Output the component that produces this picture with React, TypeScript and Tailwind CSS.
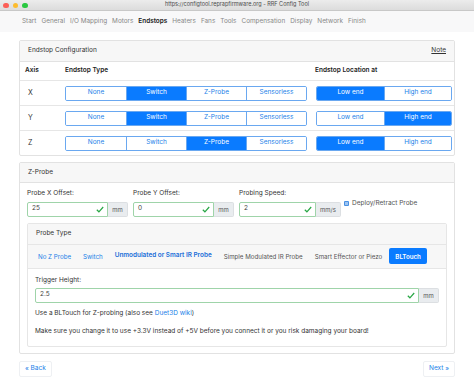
import React from "react";

const font = { fontFamily: "Inter, 'Liberation Sans', Arial, sans-serif" };

function Check() {
  return (
    <svg width="8" height="7" viewBox="0 0 8 7" className="shrink-0">
      <path d="M0.8 3.8 L2.9 5.8 L7.2 1" fill="none" stroke="#28a745" strokeWidth="1.2" />
    </svg>
  );
}

function BtnGroup({ items, active, widths }: { items: string[]; active: number; widths: string[] }) {
  return (
    <div className="flex h-[15px] rounded-[2px] border border-[#6aa8f0] overflow-hidden">
      {items.map((it, i) => (
        <div
          key={it}
          className={`${widths[i]} flex items-center justify-center text-[6.5px] ${
            i > 0 ? "border-l border-[#6aa8f0]" : ""
          } ${i === active ? "bg-[#0a7bff] text-white" : "bg-white text-[#1a7fe8]"}`}
        >
          {it}
        </div>
      ))}
    </div>
  );
}

function Row({ axis, type, loc }: { axis: string; type: number; loc: number }) {
  return (
    <div className="flex h-[25px] items-center border-t border-[#e6e6e6]">
      <div className="w-[45px] pl-[8px] text-[7px] text-[#333]">{axis}</div>
      <BtnGroup
        items={["None", "Switch", "Z-Probe", "Sensorless"]}
        active={type}
        widths={["w-[60px]", "w-[60px]", "w-[60px]", "w-[60px]"]}
      />
      <div className="w-[9px]" />
      <BtnGroup items={["Low end", "High end"]} active={loc} widths={["w-[67px]", "w-[67px]"]} />
    </div>
  );
}

function Input({ value, w, unit, uw }: { value: string; w: string; unit: string; uw: string }) {
  return (
    <div className="flex h-[15px]">
      <div className={`${w} flex items-center justify-between rounded-l-[2px] border border-[#9fd4a9] bg-white pl-[4px] pr-[3px] text-[6.5px] text-[#444]`}>
        <span>{value}</span>
        <Check />
      </div>
      <div className={`${uw} flex items-center justify-center rounded-r-[2px] border border-l-0 border-[#dcdfe2] bg-[#e9ecef] text-[6px] text-[#555]`}>
        {unit}
      </div>
    </div>
  );
}

export default function App() {
  return (
    <div className="w-[474px] h-[382px] overflow-hidden bg-white relative" style={font}>
      {/* title bar */}
      <div className="relative h-[11px] bg-gradient-to-b from-[#ececec] to-[#dcdcdc] border-b border-[#c8c8c8] flex items-center justify-center">
        <div className="absolute left-[3px] top-[2.5px] flex gap-[4px]">
          <div className="w-[5.5px] h-[5.5px] rounded-full bg-[#fc5f57]" />
          <div className="w-[5.5px] h-[5.5px] rounded-full bg-[#fdbc2e]" />
          <div className="w-[5.5px] h-[5.5px] rounded-full bg-[#29c840]" />
        </div>
        <span className="text-[5.5px] text-[#4a4a4a] leading-none">https://configtool.reprapfirmware.org - RRF Config Tool</span>
      </div>
      {/* nav */}
      <div className="h-[21px] bg-[#f8f8f9] flex items-center pl-[22px] gap-[5px] text-[6.4px] text-[#888]">
        <span>Start</span>
        <span>General</span>
        <span>I/O Mapping</span>
        <span>Motors</span>
        <span className="font-semibold text-[#222]">Endstops</span>
        <span>Heaters</span>
        <span>Fans</span>
        <span>Tools</span>
        <span>Compensation</span>
        <span>Display</span>
        <span>Network</span>
        <span>Finish</span>
      </div>

      <div className="px-[19px] pt-[8px]">
        {/* card 1 */}
        <div className="border border-[#e2e2e2] rounded-[2px]">
          <div className="h-[21px] bg-[#f7f7f7] border-b border-[#e2e2e2] flex items-center justify-between px-[8px] text-[6.5px] text-[#333]">
            <span>Endstop Configuration</span>
            <span className="underline">Note</span>
          </div>
          <div className="flex h-[18px] items-center text-[6.5px] font-semibold text-[#222]">
            <div className="w-[45px] pl-[5px]">Axis</div>
            <div className="w-[250px]">Endstop Type</div>
            <div>Endstop Location at</div>
          </div>
          <Row axis="X" type={1} loc={0} />
          <Row axis="Y" type={1} loc={1} />
          <Row axis="Z" type={2} loc={0} />
        </div>

        {/* card 2 */}
        <div className="mt-[6px] border border-[#e2e2e2] rounded-[2px]">
          <div className="h-[20px] bg-[#f7f7f7] border-b border-[#e2e2e2] flex items-center px-[8px] text-[6.5px] text-[#333]">
            Z-Probe
          </div>
          <div className="px-[7px] pt-[6px] pb-[6px]">
            <div className="flex items-end gap-[5px]">
              <div className="flex flex-col gap-[3px]">
                <span className="text-[6.5px] text-[#333]">Probe X Offset:</span>
                <Input value="25" w="w-[81px]" unit="mm" uw="w-[20px]" />
              </div>
              <div className="flex flex-col gap-[3px]">
                <span className="text-[6.5px] text-[#333]">Probe Y Offset:</span>
                <Input value="0" w="w-[81px]" unit="mm" uw="w-[20px]" />
              </div>
              <div className="flex flex-col gap-[3px]">
                <span className="text-[6.5px] text-[#333]">Probing Speed:</span>
                <Input value="2" w="w-[77px]" unit="mm/s" uw="w-[25px]" />
              </div>
              <div className="flex items-center gap-[3px] self-start mt-[10px] -ml-[2px]">
                <div className="w-[5px] h-[5px] rounded-[1px] bg-[#4a90e2] flex items-center justify-center">
                  <div className="w-[3px] h-[3px] bg-[#9cc4f2]" />
                </div>
                <span className="text-[6.5px] text-[#555]">Deploy/Retract Probe</span>
              </div>
            </div>

            {/* inner card */}
            <div className="mt-[6px] border border-[#e6e6e6] rounded-[2px]">
              <div className="h-[21px] bg-[#f7f7f7] border-b border-[#e6e6e6] flex items-center px-[8px] text-[6.5px] text-[#333]">
                Probe Type
              </div>
              <div className="h-[24px] bg-[#f7f7f7] border-b border-[#e6e6e6] flex items-center pl-[10px] text-[6.2px]">
                <span className="text-[#1a7fe8] mr-[12px]">No Z Probe</span>
                <span className="text-[#1a7fe8] mr-[12px]">Switch</span>
                <span className="text-[#1a6ed8] font-semibold text-[6.4px] mr-[12px]">Unmodulated or Smart IR Probe</span>
                <span className="text-[#555] mr-[12px]">Simple Modulated IR Probe</span>
                <span className="text-[#555] mr-[7px]">Smart Effector or Piezo</span>
                <span className="bg-[#0a7bff] text-white rounded-[2px] px-[6px] h-[16px] flex items-center font-semibold">BLTouch</span>
              </div>
              <div className="px-[7px] pt-[7px] pb-[9px]">
                <div className="text-[6.5px] text-[#333]">Trigger Height:</div>
                <div className="mt-[2px] flex h-[15px]">
                  <div className="flex-1 flex items-center justify-between rounded-l-[2px] border border-[#9fd4a9] bg-white pl-[4px] pr-[3px] text-[6.5px] text-[#444]">
                    <span>2.5</span>
                    <Check />
                  </div>
                  <div className="w-[20px] flex items-center justify-center rounded-r-[2px] border border-l-0 border-[#dcdfe2] bg-[#e9ecef] text-[6px] text-[#555]">
                    mm
                  </div>
                </div>
                <div className="mt-[6px] text-[6.5px] text-[#333]">
                  Use a BLTouch for Z-probing (also see <span className="text-[#1a7fe8]">Duet3D wiki</span>)
                </div>
                <div className="mt-[9px] text-[6.5px] text-[#333]">
                  Make sure you change it to use +3.3V instead of +5V before you connect it or you risk damaging your board!
                </div>
              </div>
            </div>
          </div>
        </div>

        <div className="mt-[7px] flex justify-between">
          <div className="h-[16px] px-[5px] flex items-center border border-[#eef0f3] rounded-[2px] text-[6.5px] text-[#1a7fe8]">« Back</div>
          <div className="h-[16px] px-[5px] flex items-center border border-[#eef0f3] rounded-[2px] text-[6.5px] text-[#1a7fe8]">Next »</div>
        </div>
      </div>
    </div>
  );
}
